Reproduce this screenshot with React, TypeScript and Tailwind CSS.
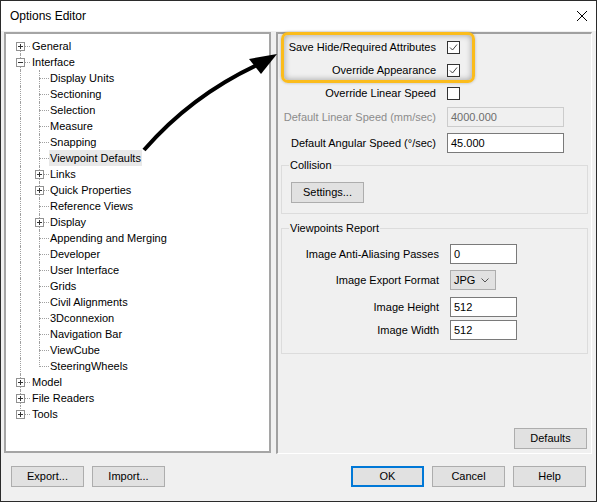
type Line = "none" | "full" | "top" | "bottom";

type Node = {
  label: string;
  level: 0 | 1;
  box?: "+" | "-";
  l0: Line;
  l1: Line;
  selected?: boolean;
};

const children = [
  "Display Units",
  "Sectioning",
  "Selection",
  "Measure",
  "Snapping",
  "Viewpoint Defaults",
  "Links",
  "Quick Properties",
  "Reference Views",
  "Display",
  "Appending and Merging",
  "Developer",
  "User Interface",
  "Grids",
  "Civil Alignments",
  "3Dconnexion",
  "Navigation Bar",
  "ViewCube",
  "SteeringWheels",
];

const expandable = ["Links", "Quick Properties", "Display"];

const tree: Node[] = [
  { label: "General", level: 0, box: "+", l0: "bottom", l1: "none" },
  { label: "Interface", level: 0, box: "-", l0: "full", l1: "none" },
  ...children.map<Node>((label, i) => ({
    label,
    level: 1,
    box: expandable.includes(label) ? "+" : undefined,
    l0: "full",
    l1: i === children.length - 1 ? "top" : "full",
    selected: label === "Viewpoint Defaults",
  })),
  { label: "Model", level: 0, box: "+", l0: "full", l1: "none" },
  { label: "File Readers", level: 0, box: "+", l0: "full", l1: "none" },
  { label: "Tools", level: 0, box: "+", l0: "top", l1: "none" },
];

function VLine({ kind, left }: { kind: Line; left: string }) {
  if (kind === "none") return null;
  const pos =
    kind === "full" ? "top-0 h-4" : kind === "top" ? "top-0 h-[9px]" : "top-[8px] h-2";
  return <span className={`absolute ${left} ${pos} border-l border-dotted border-[#a0a0a0]`} />;
}

function TreeRow({ node }: { node: Node }) {
  const center = node.level === 0 ? "left-[14px]" : "left-[33px]";
  const boxLeft = node.level === 0 ? "left-[10px]" : "left-[29px]";
  return (
    <div className="relative h-4">
      <VLine kind={node.l0} left="left-[14px]" />
      <VLine kind={node.l1} left="left-[33px]" />
      <span className={`absolute top-[8px] ${center} w-[10px] border-t border-dotted border-[#a0a0a0]`} />
      {node.box && (
        <span
          className={`absolute top-[4px] ${boxLeft} flex h-[9px] w-[9px] items-center justify-center border border-[#919191] bg-white`}
        >
          <span className="relative block h-[5px] w-[5px]">
            <span className="absolute left-0 top-[2px] h-px w-[5px] bg-[#333]" />
            {node.box === "+" && <span className="absolute left-[2px] top-0 h-[5px] w-px bg-[#333]" />}
          </span>
        </span>
      )}
      <div className={`flex h-4 items-center ${node.level === 0 ? "pl-[25px]" : "pl-[43px]"}`}>
        <span className={`whitespace-nowrap px-px leading-4 ${node.selected ? "bg-[#e8e8e8]" : ""}`}>
          {node.label}
        </span>
      </div>
    </div>
  );
}

function Check({ checked }: { checked: boolean }) {
  return (
    <span className="block h-[13px] w-[13px] border border-[#333] bg-white">
      {checked && (
        <svg width="11" height="11" viewBox="0 0 11 11">
          <path d="M2 5.5 L4.5 8 L9 2.5" fill="none" stroke="#444" strokeWidth="1" />
        </svg>
      )}
    </span>
  );
}

function Button({ children, primary }: { children: React.ReactNode; primary?: boolean }) {
  return (
    <button
      className={`flex h-[21px] w-[73px] items-center justify-center bg-[#e1e1e1] text-black ${
        primary ? "border-2 border-[#0078d7]" : "border border-[#adadad]"
      }`}
    >
      {children}
    </button>
  );
}

function Field({ value, w = "w-[117px]", disabled }: { value: string; w?: string; disabled?: boolean }) {
  return (
    <div
      className={`flex h-[20px] ${w} items-center px-[3px] ${
        disabled ? "border border-[#cccccc] bg-[#f0f0f0] text-[#6d6d6d]" : "border border-[#7a7a7a] bg-white"
      }`}
    >
      {value}
    </div>
  );
}

function Label({ children, w = "w-[158px]", muted }: { children: React.ReactNode; w?: string; muted?: boolean }) {
  return (
    <span className={`flex ${w} justify-end whitespace-nowrap ${muted ? "text-[#8c8c8c]" : ""}`}>
      <span>{children}</span>
    </span>
  );
}

export default function App() {
  return (
    <div
      className="relative flex h-[502px] w-[597px] flex-col border border-[#2b2b2b] bg-[#f0f0f0] text-[11px] text-black"
      style={{ fontFamily: '"Liberation Sans", Arial, sans-serif' }}
    >
      {/* title bar */}
      <div className="flex h-[30px] items-center justify-between bg-white pl-[9px] pr-[9px] text-[12px]">
        <span>Options Editor</span>
        <svg width="10" height="10" viewBox="0 0 10 10">
          <path d="M0 0 L10 10 M10 0 L0 10" stroke="#000" strokeWidth="1" />
        </svg>
      </div>

      <div className="flex gap-[5px] pl-[3px] pt-[1px]">
        {/* tree */}
        <div className="h-[421px] w-[267px] border-2 border-[#a5a5a5] bg-white pt-[4px]">
          {tree.map((n) => (
            <TreeRow key={n.label} node={n} />
          ))}
        </div>

        {/* settings page */}
        <div className="flex h-[422px] w-[316px] flex-col border-l-2 border-t-2 border-r border-b border-l-[#a0a0a0] border-t-[#a0a0a0] border-r-white border-b-white pt-[2px]">
          <div className="flex h-[23px] items-center">
            <Label>Save Hide/Required Attributes</Label>
            <span className="ml-[11px]">
              <Check checked />
            </span>
          </div>
          <div className="flex h-[23px] items-center">
            <Label>Override Appearance</Label>
            <span className="ml-[11px]">
              <Check checked />
            </span>
          </div>
          <div className="flex h-[23px] items-center">
            <Label>Override Linear Speed</Label>
            <span className="ml-[11px]">
              <Check checked={false} />
            </span>
          </div>
          <div className="mt-[2px] flex items-center">
            <Label muted>Default Linear Speed (mm/sec)</Label>
            <span className="ml-[11px]">
              <Field value="4000.000" disabled />
            </span>
          </div>
          <div className="mt-[6px] flex items-center">
            <Label>Default Angular Speed (°/sec)</Label>
            <span className="ml-[11px]">
              <Field value="45.000" />
            </span>
          </div>

          <fieldset className="mx-[3px] mt-[4px] border border-[#dcdcdc] p-0 pb-[10px]">
            <legend className="ml-[7px] px-[1px] leading-4">Collision</legend>
            <div className="ml-[9px] mt-[9px]">
              <Button>Settings...</Button>
            </div>
          </fieldset>

          <fieldset className="mx-[3px] mt-[6px] border border-[#dcdcdc] p-0 pb-[13px]">
            <legend className="ml-[7px] px-[1px] leading-4">Viewpoints Report</legend>
            <div className="mt-[8px] flex flex-col">
              <div className="flex items-center">
                <Label w="w-[157px]">Image Anti-Aliasing Passes</Label>
                <span className="ml-[11px]">
                  <Field value="0" w="w-[67px]" />
                </span>
              </div>
              <div className="mt-[6px] flex items-center">
                <Label w="w-[157px]">Image Export Format</Label>
                <span className="ml-[11px] flex h-[20px] w-[46px] items-center justify-between border border-[#adadad] bg-[#e1e1e1] pl-[3px] pr-[6px]">
                  JPG
                  <svg width="8" height="5" viewBox="0 0 8 5">
                    <path d="M0.5 0.5 L4 4 L7.5 0.5" fill="none" stroke="#555" strokeWidth="1" />
                  </svg>
                </span>
              </div>
              <div className="mt-[7px] flex items-center">
                <Label w="w-[157px]">Image Height</Label>
                <span className="ml-[11px]">
                  <Field value="512" w="w-[67px]" />
                </span>
              </div>
              <div className="mt-[3px] flex items-center">
                <Label w="w-[157px]">Image Width</Label>
                <span className="ml-[11px]">
                  <Field value="512" w="w-[67px]" />
                </span>
              </div>
            </div>
          </fieldset>

          <div className="mb-[4px] mr-[4px] mt-auto flex justify-end">
            <Button>Defaults</Button>
          </div>
        </div>
      </div>

      {/* bottom buttons */}
      <div className="mt-[12px] flex pl-[10px] pr-[10px]">
        <div className="flex gap-[8px]">
          <Button>Export...</Button>
          <Button>Import...</Button>
        </div>
        <div className="ml-auto flex gap-[8px]">
          <Button primary>OK</Button>
          <Button>Cancel</Button>
          <Button>Help</Button>
        </div>
      </div>

      {/* callout highlight */}
      <div className="pointer-events-none absolute left-[280px] top-[31px] h-[51px] w-[194px] rounded-[7px] border-[3px] border-[#fbbc1c] shadow-[inset_0_0_6px_rgba(0,0,0,0.35),0_0_3px_rgba(0,0,0,0.25)]" />

      {/* arrow */}
      <svg className="pointer-events-none absolute left-0 top-0" width="597" height="502" viewBox="0 0 597 502">
        <path d="M143 149 Q190 95 256 64" fill="none" stroke="#000" strokeWidth="4" />
        <polygon points="276,53 248,58 260,73" fill="#000" />
      </svg>
    </div>
  );
}
